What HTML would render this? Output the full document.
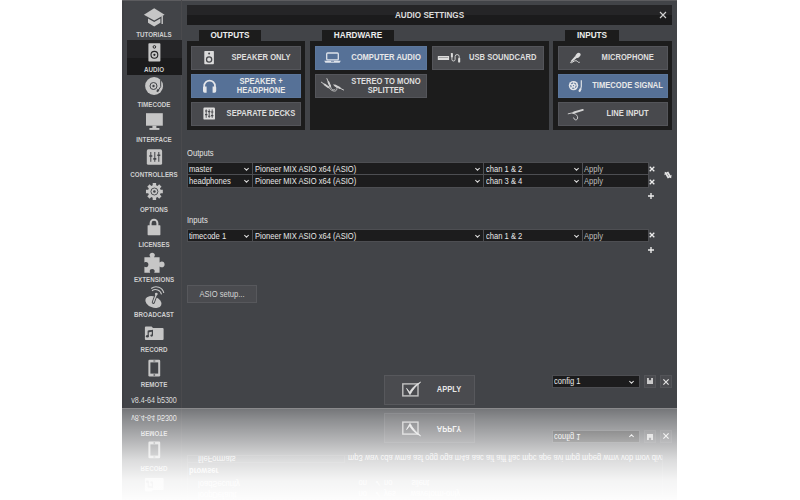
<!DOCTYPE html>
<html>
<head>
<meta charset="utf-8">
<title>Audio Settings</title>
<style>
*{box-sizing:border-box;margin:0;padding:0}
html,body{width:800px;height:500px;background:#fff;overflow:hidden}
body{font-family:"Liberation Sans",Arial,sans-serif;color:#e6e6e6;position:relative}
.abs{position:absolute}
#win{position:absolute;left:122px;top:0;width:555px;height:408px;background:#424448;overflow:hidden}
#leftline{position:absolute;left:0;top:0;width:2px;height:408px;background:#3f4044}
#topline{position:absolute;left:0;top:0;width:555px;height:1px;background:#5c5c5f}
.side{position:absolute;left:0;top:0;width:60px;height:409px;border-right:1px solid #4a4a4d}
.nav{position:absolute;left:2px;width:60px;height:35px;text-align:center}
.nav b.bg{position:absolute;left:3px;right:2px;top:0;bottom:0;background:linear-gradient(#252527 0,#252527 50%,#1b1b1c 50%,#1b1b1c 100%)}
.nav svg{position:absolute;left:50%;top:3px;margin-left:-11px;width:22px;height:22px}
.nav span{position:absolute;left:-10px;right:-10px;top:25px;font-size:7.5px;line-height:9px;font-weight:bold;color:#cfcfcf;white-space:nowrap;text-align:center;transform:scaleX(.83)}
.ver{position:absolute;left:2.2px;width:60px;top:395.8px;font-size:8.5px;line-height:9px;text-align:center;color:#dedede;white-space:nowrap;transform:scaleX(.84)}
#title{position:absolute;left:65px;top:5px;width:485px;height:20px;background:linear-gradient(#252527 0,#252527 50%,#1b1b1c 50%,#1b1b1c 100%)}
#title span{position:absolute;left:0;right:0;top:0px;text-align:center;font-size:9.8px;line-height:19px;font-weight:bold;color:#dcdcdc;transform:scaleX(.83)}
.panel{position:absolute;top:41px;height:89px;background:#1c1c1c}
.tab{position:absolute;top:30px;height:12px;background:#1c1c1c}
.tab span{position:absolute;left:-10px;right:-10px;top:-1.2px;text-align:center;font-size:9.8px;line-height:11.5px;font-weight:bold;color:#ececec;transform:scaleX(.837)}
.btn{position:absolute;height:24px;background:#48494d;border:1px solid #54555a}
.btn.on{background:#567197;border-color:#5c779c}
.btn .t{position:absolute;top:-0.4px;bottom:0.4px;display:flex;align-items:center;justify-content:center;text-align:center;color:#dedede;font-size:9.3px;font-weight:bold;line-height:9.2px;white-space:nowrap;transform:scaleX(.815)}
.btn .t.t2{line-height:8.6px;top:0px;bottom:0px}
.btn.on .t{color:#e8e8e8}
.btn svg{position:absolute}
.lbl{position:absolute;font-size:9.4px;line-height:11px;color:#e2e2e2;transform:scaleX(.81);transform-origin:left center;white-space:nowrap}
.dd{position:absolute;height:13px;background:#1c1c1d;border:1px solid #4d4e52}
.dd span{position:absolute;left:1px;top:-0.5px;font-size:9.4px;line-height:11px;color:#e8e8e8;white-space:nowrap;transform:scaleX(.81);transform-origin:left center}
.dd svg{position:absolute;right:2px;top:4.2px}
.x{position:absolute;width:10px;height:10px;margin:-5px 0 0 -5px;overflow:visible}
</style>
</head>
<body>
<div id="win">
 <div id="leftline"></div><div id="topline"></div>
 <div class="side">
  <div class="nav" style="top:5px"><span>TUTORIALS</span></div>
  <div class="nav" style="top:40px"><b class="bg"></b><span>AUDIO</span></div>
  <div class="nav" style="top:75px"><span>TIMECODE</span></div>
  <div class="nav" style="top:110px"><span>INTERFACE</span></div>
  <div class="nav" style="top:145px"><span>CONTROLLERS</span></div>
  <div class="nav" style="top:180px"><span>OPTIONS</span></div>
  <div class="nav" style="top:215px"><span>LICENSES</span></div>
  <div class="nav" style="top:250px"><span>EXTENSIONS</span></div>
  <div class="nav" style="top:285px"><span>BROADCAST</span></div>
  <div class="nav" style="top:320px"><span>RECORD</span></div>
  <div class="nav" style="top:355px"><span>REMOTE</span></div>
  <div class="ver">v8.4-64 b5300</div>
  <svg class="abs" style="left:0;top:0" width="62" height="409" viewBox="122 0 62 409">
<g fill="#c6c6c6">
<!-- tutorials -->
<path d="M154.2 8.3 L164.6 14.7 L154.2 20.6 L143.9 14.7 Z"/>
<path d="M148 18.4 L154.2 22 L160.4 18.4 V22.8 L154.2 26.4 L148 22.8 Z"/>
<rect x="161.5" y="16" width="1.4" height="8"/>
<!-- audio -->
<rect x="148.4" y="43.2" width="12" height="18.4" rx="0.8"/>
<!-- timecode -->
<circle cx="154.1" cy="86" r="9"/>
<!-- interface -->
<rect x="146" y="113.2" width="16.8" height="12.5"/>
<rect x="152.4" y="125.7" width="4" height="2.6"/>
<rect x="149.4" y="128" width="10" height="1.9"/>
<!-- controllers -->
<rect x="146.8" y="149.3" width="15.3" height="15.5" rx="1.6"/>
<!-- options -->
<path d="M152.69 185.33 L152.69 183.07 L156.11 183.07 L156.11 185.33 L157.55 185.93 L159.15 184.33 L161.57 186.75 L159.97 188.35 L160.57 189.79 L162.83 189.79 L162.83 193.21 L160.57 193.21 L159.97 194.65 L161.57 196.25 L159.15 198.67 L157.55 197.07 L156.11 197.67 L156.11 199.93 L152.69 199.93 L152.69 197.67 L151.25 197.07 L149.65 198.67 L147.23 196.25 L148.83 194.65 L148.23 193.21 L145.97 193.21 L145.97 189.79 L148.23 189.79 L148.83 188.35 L147.23 186.75 L149.65 184.33 L151.25 185.93 Z"/>
<!-- licenses -->
<rect x="147.6" y="225.2" width="12.8" height="10" rx="0.6"/>
<path d="M150.6 226 V223.2 a3.4 3.4 0 0 1 6.8 0 V226" fill="none" stroke="#c6c6c6" stroke-width="2"/>
<!-- extensions -->
<path d="M144.4 257.3 H150.4 C148.6 255 149.8 252.7 152.2 252.7 C154.6 252.7 155.8 255 154 257.3 H159.6 V262.4 C162 260.6 164.6 261.8 164.6 264.4 C164.6 267 162 268.2 159.6 266.4 V272.7 H154.2 C155.4 270.4 154.2 269 152.2 269 C150.2 269 149 270.4 150.2 272.7 H144.4 V266.8 C146.6 268 148.4 266.8 148.4 264.6 C148.4 262.4 146.6 261.2 144.4 262.4 Z"/>
<!-- broadcast -->
<ellipse cx="153.4" cy="302" rx="8.4" ry="5.5" transform="rotate(22 153.4 302)"/>
<!-- record -->
<path d="M144.9 327.4 a1 1 0 0 1 1 -1 H151.6 L153 328 H162.6 a1 1 0 0 1 1 1 V339 a1 1 0 0 1 -1 1 H145.9 a1 1 0 0 1 -1 -1 Z"/>
<!-- remote -->
<rect x="148.4" y="359.7" width="11.8" height="16.8" rx="1.2"/>
</g>
<!-- audio details -->
<circle cx="154.4" cy="46.9" r="1.3" fill="none" stroke="#222224" stroke-width="1"/>
<circle cx="154.4" cy="54.8" r="3.4" fill="none" stroke="#222224" stroke-width="1.1"/>
<circle cx="154.4" cy="54.8" r="1.1" fill="#222224"/>
<!-- timecode details -->
<circle cx="153.5" cy="86" r="3.5" fill="none" stroke="#424448" stroke-width="1"/>
<circle cx="153.5" cy="86" r="1.2" fill="#424448"/>
<path d="M160.7 79.6 V86.6 L157.8 91" fill="none" stroke="#424448" stroke-width="1"/>
<path d="M158.5 89.4 L157.1 91.8" fill="none" stroke="#424448" stroke-width="2"/>
<!-- controllers details -->
<g stroke="#424448" fill="none">
<path d="M150.8 152 V161.8 M154.8 152 V161.8 M158.8 152 V161.8" stroke-width="1"/>
<path d="M149.3 156 H152.3 M153.3 158.9 H156.3 M157.3 155.2 H160.3" stroke-width="1.6"/>
</g>
<!-- options details -->
<circle cx="154.4" cy="191.5" r="3.5" fill="none" stroke="#424448" stroke-width="0.9"/>
<circle cx="154.4" cy="191.5" r="1.3" fill="#424448"/>
<!-- broadcast details -->
<path d="M153.3 302.4 L156.3 294.4" stroke="#424448" stroke-width="3" stroke-linecap="round"/>
<path d="M153.3 302.2 L156.3 294.4" stroke="#c6c6c6" stroke-width="1.3" stroke-linecap="round"/>
<circle cx="156.3" cy="294.1" r="1.4" fill="#c6c6c6"/>
<path d="M152 290.7 A6 6 0 0 1 161.5 294.4" fill="none" stroke="#c6c6c6" stroke-width="1.1"/>
<path d="M151.2 288.5 A7.9 7.9 0 0 1 163.8 293" fill="none" stroke="#c6c6c6" stroke-width="1.1"/>
<!-- record details -->
<path d="M148.2 336 V331.2 L152.4 330.4 V335.4" fill="none" stroke="#424448" stroke-width="1.2"/><path d="M148.2 331.6 L152.4 330.8" fill="none" stroke="#424448" stroke-width="1.6"/>
<ellipse cx="147.4" cy="336.2" rx="1.5" ry="1.25" fill="#424448"/>
<ellipse cx="151.6" cy="335.6" rx="1.3" ry="1.1" fill="#424448"/>
<!-- remote details -->
<rect x="150.4" y="362.4" width="7.8" height="11.2" fill="#424448"/>
<rect x="153.5" y="374.4" width="1.6" height="1.2" fill="#424448"/>
<rect x="153.3" y="360.6" width="2" height="0.8" fill="#424448"/>
</svg>
 </div>
 <div id="title"><span>AUDIO SETTINGS</span></div>
 <svg class="x" style="left:540.8px;top:14.7px" viewBox="-5 -5 10 10"><path d="M-3 -3 L3 3 M-3 3 L3 -3" stroke="#d0d0d0" stroke-width="1.15" fill="none"/></svg>
 <!-- OUTPUTS -->
 <div class="tab" style="left:77px;width:62px"><span>OUTPUTS</span></div>
 <div class="panel" style="left:65px;width:118px"></div>
 <div class="btn" style="left:69px;top:46px;width:110px"><div class="t" style="left:30px;right:0">SPEAKER ONLY</div></div>
 <div class="btn on" style="left:69px;top:74px;width:110px"><div class="t t2" style="left:30px;right:0">SPEAKER +<br>HEADPHONE</div></div>
 <div class="btn" style="left:69px;top:102px;width:110px"><div class="t" style="left:30px;right:0">SEPARATE DECKS</div></div>
 <!-- HARDWARE -->
 <div class="tab" style="left:200px;width:72px"><span>HARDWARE</span></div>
 <div class="panel" style="left:188px;width:239px"></div>
 <div class="btn on" style="left:193px;top:46px;width:112px"><div class="t" style="left:30px;right:0">COMPUTER AUDIO</div></div>
 <div class="btn" style="left:309.5px;top:46px;width:112.5px"><div class="t" style="left:29px;right:0">USB SOUNDCARD</div></div>
 <div class="btn" style="left:193px;top:74px;width:112px"><div class="t t2" style="left:30px;right:0">STEREO TO MONO<br>SPLITTER</div></div>
 <!-- INPUTS -->
 <div class="tab" style="left:443px;width:54px"><span>INPUTS</span></div>
 <div class="panel" style="left:431px;width:119px"></div>
 <div class="btn" style="left:436px;top:46px;width:110px"><div class="t" style="left:28.6px;right:0">MICROPHONE</div></div>
 <div class="btn on" style="left:436px;top:74px;width:110px"><div class="t" style="left:28.8px;right:0">TIMECODE SIGNAL</div></div>
 <div class="btn" style="left:436px;top:102px;width:110px"><div class="t" style="left:28.8px;right:0">LINE INPUT</div></div>
 <svg class="abs" style="left:0;top:0;pointer-events:none" width="555" height="140" viewBox="122 0 555 140">
<!-- speaker only -->
<rect x="204.3" y="51" width="9.6" height="13.2" rx="0.7" fill="#dcdcdc"/>
<circle cx="209.1" cy="53.6" r="1" fill="#48494d"/>
<circle cx="209.1" cy="59.5" r="2.6" fill="none" stroke="#48494d" stroke-width="1.3"/>
<!-- speaker + headphone -->
<path d="M204.2 88 V86 a5.4 5.4 0 0 1 10.8 0 V88" fill="none" stroke="#e4e6ea" stroke-width="1.7"/>
<path d="M203 87.4 a1 1 0 0 1 1 -1 H206.6 V92.7 H204.6 a1.6 1.6 0 0 1 -1.6 -1.6 Z" fill="#e4e6ea"/>
<path d="M216.2 87.4 a1 1 0 0 0 -1 -1 H212.6 V92.7 H214.6 a1.6 1.6 0 0 0 1.6 -1.6 Z" fill="#e4e6ea"/>
<!-- separate decks -->
<rect x="203.4" y="107.6" width="11.6" height="12" rx="1.2" fill="#dcdcdc"/>
<g stroke="#48494d" fill="none"><path d="M206.2 109.4 V117.8 M209.2 109.4 V117.8 M212.2 109.4 V117.8" stroke-width="0.9"/>
<path d="M205 114.6 H207.4 M208 111.6 H210.4 M211 115.6 H213.4 M205 111 H207.4 M211 112 H213.4 M208 116.2 H210.4" stroke-width="1.1"/></g>
<!-- computer audio -->
<rect x="326.7" y="53" width="11.6" height="6.8" rx="0.9" fill="none" stroke="#dde2ea" stroke-width="1.3"/>
<path d="M324.2 60.8 H340.8 L339.6 62.7 H325.4 Z" fill="#dde2ea"/>
<rect x="331" y="60.9" width="3" height="0.7" fill="#567197"/>
<!-- usb soundcard -->
<rect x="437.8" y="55.9" width="11.3" height="4.2" rx="0.4" fill="#dcdcdc"/>
<rect x="438.8" y="57" width="9.3" height="0.7" fill="#8a8a8c"/>
<rect x="450.9" y="53.1" width="2" height="4.4" rx="0.4" fill="#dcdcdc"/>
<rect x="458.1" y="58.1" width="2.1" height="4.4" rx="0.4" fill="#dcdcdc"/>
<path d="M451.9 57.4 V59.4 a1.6 1.6 0 0 0 3.2 0 V56.6 a2.05 2.05 0 0 1 4.1 0 V58.4" fill="none" stroke="#dcdcdc" stroke-width="0.9"/>
<!-- stereo to mono splitter -->
<g fill="none" stroke="#cfcfcf" stroke-linecap="round">
<path d="M321.4 82.2 L329.4 88" stroke-width="1"/><path d="M324.6 84.5 L328.4 87.3" stroke-width="1.9"/>
<path d="M326.9 78.6 L330.6 87" stroke-width="1"/><path d="M328.4 82 L330.2 86.2" stroke-width="1.9"/>
<path d="M343.6 90 L334 85" stroke-width="1"/><path d="M339.6 87.9 L335.2 85.6" stroke-width="1.9"/>
<path d="M329.4 88 C331 91 335.4 92.2 336.6 90 C337.6 88 336.6 85.6 334 85" stroke-width="0.8"/>
<path d="M330.6 87 C331.6 89.6 333.4 90.6 335 89.4" stroke-width="0.8"/>
</g>
<!-- microphone -->
<ellipse cx="577.9" cy="55.4" rx="2.9" ry="2.1" transform="rotate(-45 577.9 55.3)" fill="#dcdcdc"/>
<path d="M577 57.8 L575.2 56 L570.8 61 L571.9 62 Z" fill="#dcdcdc"/>
<path d="M571.4 61.4 C569.6 63 571 63.4 573 61.8 C575 60.2 577 60.6 577.6 61.6 C578.2 62.4 579 62.6 579.8 62.2" fill="none" stroke="#dcdcdc" stroke-width="1"/>
<!-- timecode signal -->
<circle cx="573.5" cy="85.6" r="4.7" fill="#e2e4e8"/>
<circle cx="573.5" cy="85.6" r="2.7" fill="none" stroke="#567197" stroke-width="1.1" stroke-dasharray="2.2 1.1"/>
<circle cx="573.5" cy="85.6" r="0.7" fill="#567197"/>
<path d="M581.3 80.2 V86.6 C581.3 88.4 580.4 90 579.2 91.8" fill="none" stroke="#e2e4e8" stroke-width="1.15"/>
<path d="M580.7 88.6 L579.3 91.5" fill="none" stroke="#e2e4e8" stroke-width="2"/>
<!-- line input -->
<g fill="none" stroke="#d4d4d4" stroke-linecap="round">
<path d="M582.8 109.9 L574 112.5" stroke-width="1.9"/>
<path d="M574 112.5 L568.2 113.8" stroke-width="0.9"/>
<path d="M572.6 113.2 C574.8 113.5 576.8 114.6 577.5 116.6 C578.2 118.8 576.6 120.3 575.3 119.8 C574.3 119.4 573.8 118.6 573.6 117.9" stroke-width="0.95"/>
</g>
</svg>
 <!-- Outputs rows -->
 <div class="lbl" style="left:64.6px;top:147px">Outputs</div>
 <div class="dd" style="left:65px;top:162px;width:66px;height:13px"><span>master</span><svg width="7" height="4.5" viewBox="0 0 7 4.5"><path d="M1.3 1 L3.5 3.2 L5.7 1" fill="none" stroke="#e0e0e0" stroke-width="1.05"/></svg></div>
 <div class="dd" style="left:130px;top:162px;width:232px;height:13px"><span style="left:1.9px">Pioneer MIX ASIO x64 (ASIO)</span><svg width="7" height="4.5" viewBox="0 0 7 4.5"><path d="M1.3 1 L3.5 3.2 L5.7 1" fill="none" stroke="#e0e0e0" stroke-width="1.05"/></svg></div>
 <div class="dd" style="left:361px;top:162px;width:100px;height:13px"><span style="left:1.9px">chan 1 &amp; 2</span><svg width="7" height="4.5" viewBox="0 0 7 4.5"><path d="M1.3 1 L3.5 3.2 L5.7 1" fill="none" stroke="#e0e0e0" stroke-width="1.05"/></svg></div>
 <div class="dd" style="left:460px;top:162px;width:67px;height:13px"><span style="color:#bcbcbc">Apply</span></div>
 <div class="dd" style="left:65px;top:174px;width:66px;height:14px"><span>headphones</span><svg width="7" height="4.5" viewBox="0 0 7 4.5"><path d="M1.3 1 L3.5 3.2 L5.7 1" fill="none" stroke="#e0e0e0" stroke-width="1.05"/></svg></div>
 <div class="dd" style="left:130px;top:174px;width:232px;height:14px"><span style="left:1.9px">Pioneer MIX ASIO x64 (ASIO)</span><svg width="7" height="4.5" viewBox="0 0 7 4.5"><path d="M1.3 1 L3.5 3.2 L5.7 1" fill="none" stroke="#e0e0e0" stroke-width="1.05"/></svg></div>
 <div class="dd" style="left:361px;top:174px;width:100px;height:14px"><span style="left:1.9px">chan 3 &amp; 4</span><svg width="7" height="4.5" viewBox="0 0 7 4.5"><path d="M1.3 1 L3.5 3.2 L5.7 1" fill="none" stroke="#e0e0e0" stroke-width="1.05"/></svg></div>
 <div class="dd" style="left:460px;top:174px;width:67px;height:14px"><span style="color:#bcbcbc">Apply</span></div>
 <svg class="x" style="left:529.8px;top:169.1px" viewBox="-5 -5 10 10"><path d="M-2.3 -2.3 L2.3 2.3 M-2.3 2.3 L2.3 -2.3" stroke="#ececec" stroke-width="1.3" fill="none"/></svg>
 <svg class="x" style="left:529.8px;top:181.8px" viewBox="-5 -5 10 10"><path d="M-2.3 -2.3 L2.3 2.3 M-2.3 2.3 L2.3 -2.3" stroke="#ececec" stroke-width="1.3" fill="none"/></svg>
 <svg class="x" style="left:529.4px;top:196px" viewBox="-5 -5 10 10"><path d="M-3 0 H3 M0 -3 V3" stroke="#ececec" stroke-width="1.35" fill="none"/></svg>
 <svg class="abs" style="left:541.4px;top:170.2px" width="10" height="10" viewBox="0 0 10 10"><g transform="rotate(-30 5 5)" fill="#e4e4e4"><path d="M3.9 0.6 L6 3.4 H4.9 V8 H3 V3.4 H1.8 Z"/><path d="M6.1 9.4 L4 6.6 H5.1 V2 H7 V6.6 H8.2 Z"/></g></svg>
 <div class="lbl" style="left:64.6px;top:213.5px">Inputs</div>
 <div class="dd" style="left:65px;top:229px;width:66px;height:13px"><span>timecode 1</span><svg width="7" height="4.5" viewBox="0 0 7 4.5"><path d="M1.3 1 L3.5 3.2 L5.7 1" fill="none" stroke="#e0e0e0" stroke-width="1.05"/></svg></div>
 <div class="dd" style="left:130px;top:229px;width:232px;height:13px"><span style="left:1.9px">Pioneer MIX ASIO x64 (ASIO)</span><svg width="7" height="4.5" viewBox="0 0 7 4.5"><path d="M1.3 1 L3.5 3.2 L5.7 1" fill="none" stroke="#e0e0e0" stroke-width="1.05"/></svg></div>
 <div class="dd" style="left:361px;top:229px;width:100px;height:13px"><span style="left:1.9px">chan 1 &amp; 2</span><svg width="7" height="4.5" viewBox="0 0 7 4.5"><path d="M1.3 1 L3.5 3.2 L5.7 1" fill="none" stroke="#e0e0e0" stroke-width="1.05"/></svg></div>
 <div class="dd" style="left:460px;top:229px;width:67px;height:13px"><span style="color:#bcbcbc">Apply</span></div>
 <svg class="x" style="left:529.8px;top:235.3px" viewBox="-5 -5 10 10"><path d="M-2.3 -2.3 L2.3 2.3 M-2.3 2.3 L2.3 -2.3" stroke="#ececec" stroke-width="1.3" fill="none"/></svg>
 <svg class="x" style="left:529.4px;top:249.5px" viewBox="-5 -5 10 10"><path d="M-3 0 H3 M0 -3 V3" stroke="#ececec" stroke-width="1.35" fill="none"/></svg>
 <div class="abs" style="left:65px;top:285px;width:70px;height:18px;background:#4a4b4f;border:1px solid #57585c"><span class="abs" style="left:0;right:0;top:0;text-align:center;font-size:9.4px;line-height:16px;color:#d4d4d4;transform:scaleX(.81)">ASIO setup...</span></div>
 <div class="abs" style="left:262px;top:375px;width:91px;height:30px;background:#4a4b4f;border:1px solid #57585c"><svg class="abs" style="left:15px;top:5px" width="22" height="17" viewBox="400 381 22 17"><rect x="402.8" y="383.9" width="15.2" height="12" fill="none" stroke="#c2c2c2" stroke-width="1.4"/><path d="M406.6 388.4 L409.6 392.2 C412 388 415.5 384.5 420.6 382.2 C416 385.5 412.5 390 410 394.6 Z" fill="#e2e2e2" stroke="#e2e2e2" stroke-width="0.8" stroke-linejoin="round"/></svg><div class="abs" style="left:44px;top:0;width:40px;line-height:27px;font-size:9.3px;font-weight:bold;color:#e6e6e6;text-align:center;transform:scaleX(.806)">APPLY</div></div>
 <div class="dd" style="left:430px;top:375px;width:88px;height:13px"><span style="top:-1.4px">config 1</span><svg style="right:4px" width="7" height="4.5" viewBox="0 0 7 4.5"><path d="M1.3 1 L3.5 3.2 L5.7 1" fill="none" stroke="#e0e0e0" stroke-width="1.05"/></svg></div>
 <div class="abs" style="left:522px;top:375px;width:12px;height:13px;background:#4a4b4f;border:1px solid #535458"><svg class="abs" style="left:2px;top:2.4px" width="6" height="6" viewBox="0 0 6 6"><path d="M0 0 H6 V6 H0 Z" fill="#cacaca"/><rect x="1.9" y="0" width="2.2" height="2.2" fill="#4a4b4f"/></svg></div>
 <div class="abs" style="left:538px;top:375px;width:12px;height:13px;background:#4a4b4f;border:1px solid #535458"><svg class="x" style="left:5.4px;top:5.6px" viewBox="-5 -5 10 10"><path d="M-2.6 -2.6 L2.6 2.6 M-2.6 2.6 L2.6 -2.6" stroke="#e6e6e6" stroke-width="1.15" fill="none"/></svg></div>
</div>
<!-- reflection -->
<div class="abs" style="left:122px;top:408px;width:555px;height:92px;background:#424448"></div>
<div class="abs" style="left:122px;top:408.9px;width:555px;height:409px;background:#424448;transform:scaleY(-1);overflow:hidden">
 <div class="side">
  <div class="nav" style="top:5px"><span>TUTORIALS</span></div>
  <div class="nav" style="top:40px"><b class="bg"></b><span>AUDIO</span></div>
  <div class="nav" style="top:75px"><span>TIMECODE</span></div>
  <div class="nav" style="top:110px"><span>INTERFACE</span></div>
  <div class="nav" style="top:145px"><span>CONTROLLERS</span></div>
  <div class="nav" style="top:180px"><span>OPTIONS</span></div>
  <div class="nav" style="top:215px"><span>LICENSES</span></div>
  <div class="nav" style="top:250px"><span>EXTENSIONS</span></div>
  <div class="nav" style="top:285px"><span>BROADCAST</span></div>
  <div class="nav" style="top:320px"><span>RECORD</span></div>
  <div class="nav" style="top:355px"><span>REMOTE</span></div>
  <div class="ver">v8.4-64 b5300</div>
  <svg class="abs" style="left:0;top:0" width="62" height="409" viewBox="122 0 62 409">
<g fill="#c6c6c6">
<!-- tutorials -->
<path d="M154.2 8.3 L164.6 14.7 L154.2 20.6 L143.9 14.7 Z"/>
<path d="M148 18.4 L154.2 22 L160.4 18.4 V22.8 L154.2 26.4 L148 22.8 Z"/>
<rect x="161.5" y="16" width="1.4" height="8"/>
<!-- audio -->
<rect x="148.4" y="43.2" width="12" height="18.4" rx="0.8"/>
<!-- timecode -->
<circle cx="154.1" cy="86" r="9"/>
<!-- interface -->
<rect x="146" y="113.2" width="16.8" height="12.5"/>
<rect x="152.4" y="125.7" width="4" height="2.6"/>
<rect x="149.4" y="128" width="10" height="1.9"/>
<!-- controllers -->
<rect x="146.8" y="149.3" width="15.3" height="15.5" rx="1.6"/>
<!-- options -->
<path d="M152.69 185.33 L152.69 183.07 L156.11 183.07 L156.11 185.33 L157.55 185.93 L159.15 184.33 L161.57 186.75 L159.97 188.35 L160.57 189.79 L162.83 189.79 L162.83 193.21 L160.57 193.21 L159.97 194.65 L161.57 196.25 L159.15 198.67 L157.55 197.07 L156.11 197.67 L156.11 199.93 L152.69 199.93 L152.69 197.67 L151.25 197.07 L149.65 198.67 L147.23 196.25 L148.83 194.65 L148.23 193.21 L145.97 193.21 L145.97 189.79 L148.23 189.79 L148.83 188.35 L147.23 186.75 L149.65 184.33 L151.25 185.93 Z"/>
<!-- licenses -->
<rect x="147.6" y="225.2" width="12.8" height="10" rx="0.6"/>
<path d="M150.6 226 V223.2 a3.4 3.4 0 0 1 6.8 0 V226" fill="none" stroke="#c6c6c6" stroke-width="2"/>
<!-- extensions -->
<path d="M144.4 257.3 H150.4 C148.6 255 149.8 252.7 152.2 252.7 C154.6 252.7 155.8 255 154 257.3 H159.6 V262.4 C162 260.6 164.6 261.8 164.6 264.4 C164.6 267 162 268.2 159.6 266.4 V272.7 H154.2 C155.4 270.4 154.2 269 152.2 269 C150.2 269 149 270.4 150.2 272.7 H144.4 V266.8 C146.6 268 148.4 266.8 148.4 264.6 C148.4 262.4 146.6 261.2 144.4 262.4 Z"/>
<!-- broadcast -->
<ellipse cx="153.4" cy="302" rx="8.4" ry="5.5" transform="rotate(22 153.4 302)"/>
<!-- record -->
<path d="M144.9 327.4 a1 1 0 0 1 1 -1 H151.6 L153 328 H162.6 a1 1 0 0 1 1 1 V339 a1 1 0 0 1 -1 1 H145.9 a1 1 0 0 1 -1 -1 Z"/>
<!-- remote -->
<rect x="148.4" y="359.7" width="11.8" height="16.8" rx="1.2"/>
</g>
<!-- audio details -->
<circle cx="154.4" cy="46.9" r="1.3" fill="none" stroke="#222224" stroke-width="1"/>
<circle cx="154.4" cy="54.8" r="3.4" fill="none" stroke="#222224" stroke-width="1.1"/>
<circle cx="154.4" cy="54.8" r="1.1" fill="#222224"/>
<!-- timecode details -->
<circle cx="153.5" cy="86" r="3.5" fill="none" stroke="#424448" stroke-width="1"/>
<circle cx="153.5" cy="86" r="1.2" fill="#424448"/>
<path d="M160.7 79.6 V86.6 L157.8 91" fill="none" stroke="#424448" stroke-width="1"/>
<path d="M158.5 89.4 L157.1 91.8" fill="none" stroke="#424448" stroke-width="2"/>
<!-- controllers details -->
<g stroke="#424448" fill="none">
<path d="M150.8 152 V161.8 M154.8 152 V161.8 M158.8 152 V161.8" stroke-width="1"/>
<path d="M149.3 156 H152.3 M153.3 158.9 H156.3 M157.3 155.2 H160.3" stroke-width="1.6"/>
</g>
<!-- options details -->
<circle cx="154.4" cy="191.5" r="3.5" fill="none" stroke="#424448" stroke-width="0.9"/>
<circle cx="154.4" cy="191.5" r="1.3" fill="#424448"/>
<!-- broadcast details -->
<path d="M153.3 302.4 L156.3 294.4" stroke="#424448" stroke-width="3" stroke-linecap="round"/>
<path d="M153.3 302.2 L156.3 294.4" stroke="#c6c6c6" stroke-width="1.3" stroke-linecap="round"/>
<circle cx="156.3" cy="294.1" r="1.4" fill="#c6c6c6"/>
<path d="M152 290.7 A6 6 0 0 1 161.5 294.4" fill="none" stroke="#c6c6c6" stroke-width="1.1"/>
<path d="M151.2 288.5 A7.9 7.9 0 0 1 163.8 293" fill="none" stroke="#c6c6c6" stroke-width="1.1"/>
<!-- record details -->
<path d="M148.2 336 V331.2 L152.4 330.4 V335.4" fill="none" stroke="#424448" stroke-width="1.2"/><path d="M148.2 331.6 L152.4 330.8" fill="none" stroke="#424448" stroke-width="1.6"/>
<ellipse cx="147.4" cy="336.2" rx="1.5" ry="1.25" fill="#424448"/>
<ellipse cx="151.6" cy="335.6" rx="1.3" ry="1.1" fill="#424448"/>
<!-- remote details -->
<rect x="150.4" y="362.4" width="7.8" height="11.2" fill="#424448"/>
<rect x="153.5" y="374.4" width="1.6" height="1.2" fill="#424448"/>
<rect x="153.3" y="360.6" width="2" height="0.8" fill="#424448"/>
</svg>
 </div>
 <div class="abs" style="left:262px;top:375px;width:91px;height:30px;background:#4a4b4f;border:1px solid #57585c"><svg class="abs" style="left:15px;top:5px" width="22" height="17" viewBox="400 381 22 17"><rect x="402.8" y="383.9" width="15.2" height="12" fill="none" stroke="#c2c2c2" stroke-width="1.4"/><path d="M406.6 388.4 L409.6 392.2 C412 388 415.5 384.5 420.6 382.2 C416 385.5 412.5 390 410 394.6 Z" fill="#e2e2e2" stroke="#e2e2e2" stroke-width="0.8" stroke-linejoin="round"/></svg><div class="abs" style="left:44px;top:0;width:40px;line-height:27px;font-size:9.3px;font-weight:bold;color:#e6e6e6;text-align:center;transform:scaleX(.806)">APPLY</div></div>
 <div class="dd" style="left:430px;top:375px;width:88px;height:13px"><span style="top:-1.4px">config 1</span><svg style="right:4px" width="7" height="4.5" viewBox="0 0 7 4.5"><path d="M1.3 1 L3.5 3.2 L5.7 1" fill="none" stroke="#e0e0e0" stroke-width="1.05"/></svg></div>
 <div class="abs" style="left:522px;top:375px;width:12px;height:13px;background:#4a4b4f;border:1px solid #535458"><svg class="abs" style="left:2px;top:2.4px" width="6" height="6" viewBox="0 0 6 6"><path d="M0 0 H6 V6 H0 Z" fill="#cacaca"/><rect x="1.9" y="0" width="2.2" height="2.2" fill="#4a4b4f"/></svg></div>
 <div class="abs" style="left:538px;top:375px;width:12px;height:13px;background:#4a4b4f;border:1px solid #535458"><svg class="x" style="left:5.4px;top:5.6px" viewBox="-5 -5 10 10"><path d="M-2.6 -2.6 L2.6 2.6 M-2.6 2.6 L2.6 -2.6" stroke="#e6e6e6" stroke-width="1.15" fill="none"/></svg></div>
 <div class="abs" style="left:65px;top:300px;width:476px;height:63px;border:1px solid #59595c"></div>
 <div class="abs" style="left:65px;top:354.5px;width:158px;height:8.5px;border:1px solid #59595c"></div>
 <div class="lbl" style="left:76px;top:353.4px;">fileFormats</div>
 <div class="lbl" style="left:225.5px;top:354.4px;width:388px;overflow:hidden">mp3 wav cda wma asf ogg oga m4a aac aif aiff flac mpc ape avi mpg mpeg wmv vob mov divx mkv mp4 flv</div>
 <div class="lbl" style="left:67px;top:341.4px;font-weight:bold;">browser</div>
 <div class="lbl" style="left:76px;top:328.4px;">loadSecurity</div>
 <div class="lbl" style="left:225.5px;top:329.4px;width:388px;overflow:hidden">&nbsp; &nbsp; &nbsp;on &nbsp; &nbsp;✓ no &nbsp; &nbsp; &nbsp; &nbsp; silent</div>
 <div class="lbl" style="left:76px;top:316.9px;">loopDefault</div>
 <div class="lbl" style="left:225.5px;top:317.9px;width:388px;overflow:hidden">&nbsp; &nbsp; &nbsp;no &nbsp; &nbsp;✓ yes &nbsp; &nbsp; &nbsp; waveform-only</div>
</div>
<div class="abs" style="left:122px;top:409px;width:555px;height:91px;background:linear-gradient(rgba(255,255,255,.27) 0,rgba(255,255,255,.40) 12%,rgba(255,255,255,.60) 34%,rgba(255,255,255,.81) 56%,rgba(255,255,255,.94) 78%,rgba(255,255,255,.99) 100%)"></div>
<div class="abs" style="left:122px;top:408px;width:555px;height:1px;background:#8a8a8c"></div>
</body>
</html>
